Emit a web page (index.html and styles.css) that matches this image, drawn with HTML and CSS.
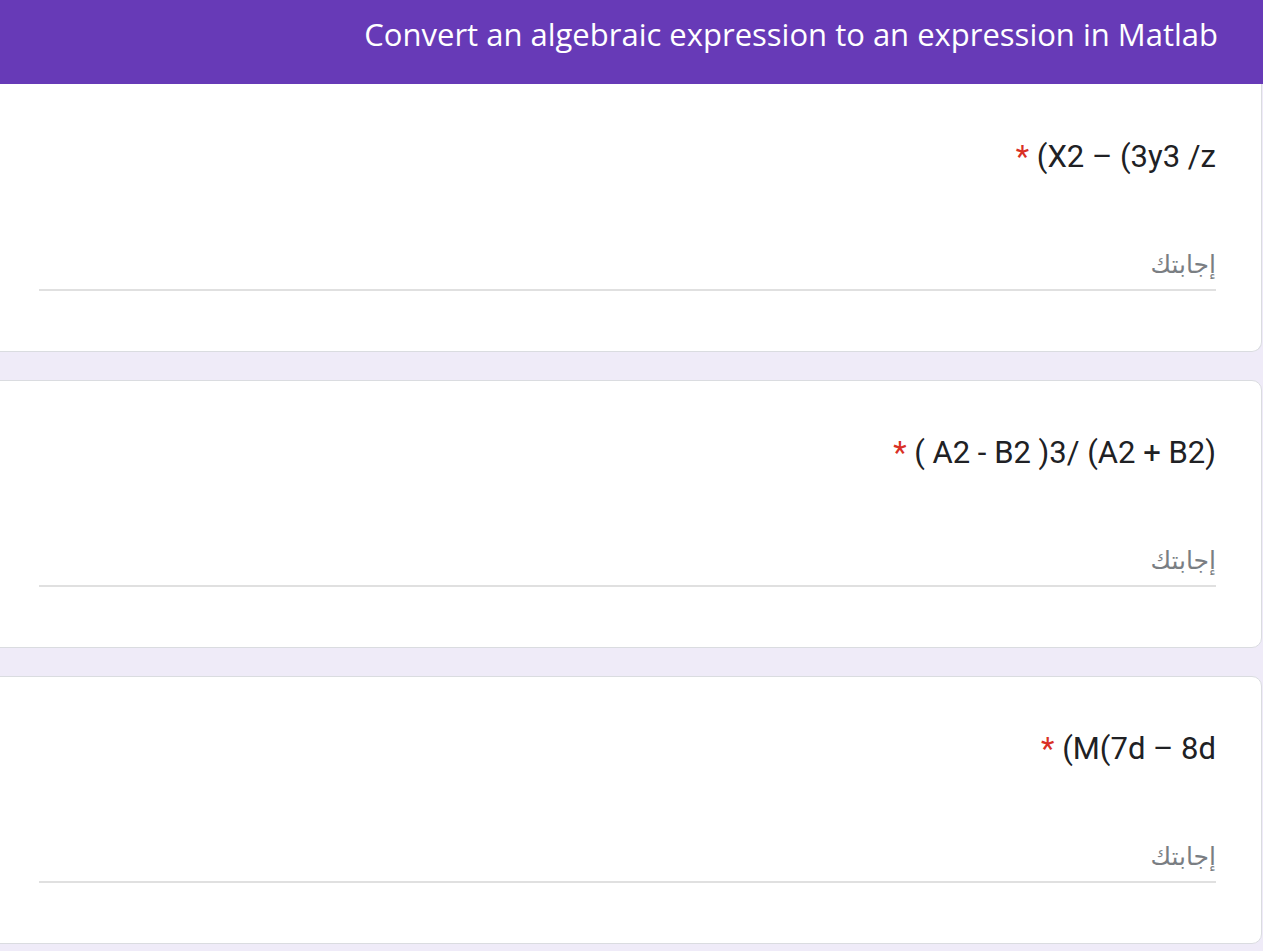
FILE: index.html
```html
<!DOCTYPE html>
<html lang="ar" dir="rtl">
<head>
    <meta charset="UTF-8">
    <meta name="viewport" content="width=device-width, initial-scale=1.0">
    <title>Convert an algebraic expression to an expression in Matlab</title>
    <link rel="stylesheet" href="styles.css">
</head>
<body>
    <header class="form-header">
        <h1 dir="ltr">Convert an algebraic expression to an expression in Matlab</h1>
    </header>

    <div class="questions">
        <div class="question-card">
            <div class="question-title"><span dir="ltr">(X2 – (3y3 /z</span> <span class="required">*</span></div>
            <input class="answer" type="text" placeholder="إجابتك">
        </div>

        <div class="question-card">
            <div class="question-title"><span dir="ltr">( A2 - B2 )3/ (A2 + B2)</span> <span class="required">*</span></div>
            <input class="answer" type="text" placeholder="إجابتك">
        </div>

        <div class="question-card">
            <div class="question-title"><span dir="ltr">(M(7d – 8d</span> <span class="required">*</span></div>
            <input class="answer" type="text" placeholder="إجابتك">
        </div>
    </div>
</body>
</html>
```

FILE: styles.css
```css
body {
    margin: 0;
    background-color: #efebf8;
    font-family: Roboto, "Noto Sans", Arial, sans-serif;
    overflow: hidden;
}

.form-header {
    background-color: #673ab7;
    height: 84px;
    padding: 0 45px;
    display: flex;
    align-items: center;
    justify-content: flex-start;
}

.form-header h1 {
    margin: 0;
    color: #fff;
    font-family: "Open Sans", sans-serif;
    font-weight: 400;
    font-size: 31px;
    letter-spacing: 0;
    padding-bottom: 16px;
}

.questions {
    display: flex;
    flex-direction: column;
    gap: 28px;
}

.question-card {
    background: #fff;
    border: 1px solid #dadce0;
    border-top: none;
    border-radius: 0 0 10px 10px;
    margin-left: -12px;
    margin-right: 1px;
    height: 268px;
    box-sizing: border-box;
    padding: 50px 45px 0 50px;
}

.question-card + .question-card {
    border-top: 1px solid #dadce0;
    border-radius: 10px;
    padding-top: 49px;
}

.question-title {
    font-size: 31px;
    color: #202124;
    line-height: 46px;
}

.required {
    color: #d93025;
}

.answer {
    display: block;
    width: 100%;
    margin-top: 70px;
    border: none;
    border-bottom: 2px solid #e0e0e0;
    padding: 0 0 10px;
    font-family: "DejaVu Sans", "Noto Sans", sans-serif;
    font-size: 25px;
    background: transparent;
    outline: none;
}

.answer::placeholder {
    color: #7a7e83;
}
```
